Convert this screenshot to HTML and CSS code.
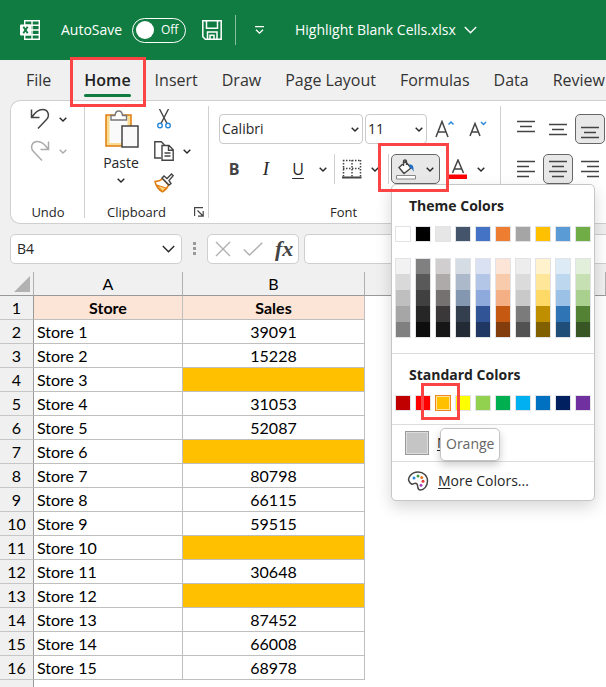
FILE: index.html
```html
<!DOCTYPE html>
<html lang="en">
<head>
<meta charset="utf-8">
<title>Highlight Blank Cells.xlsx</title>
<link rel="stylesheet" href="styles.css">
</head>
<body>
<svg class="defs" aria-hidden="true">
  <symbol id="chev" viewBox="0 0 8 5"><path d="M.7.7 4 4 7.3.7" fill="none" stroke="currentColor" stroke-width="1.4"/></symbol>
  <symbol id="chev-lg" viewBox="0 0 13 8"><path d="M.8 1 6.5 6.7 12.2 1" fill="none" stroke="currentColor" stroke-width="1.4"/></symbol>
</svg>

<header class="titlebar">
  <svg class="logo" viewBox="0 0 20 20" width="20" height="20">
    <path d="M4.700 5V.7h14.600v18.600H4.700V15M4.700 5.300h14.600M10 10h9.300M4.700 14.700h14.600M12 .7v18.600" fill="none" stroke="#fff" stroke-width="1.400"/>
    <rect x="0" y="4.500" width="11" height="11" rx="1" fill="#fff"/>
    <path d="M3.300 6.800l4.400 6.400M7.700 6.800l-4.400 6.400" stroke="#107c41" stroke-width="1.900"/>
  </svg>
  <span class="autosave" id="autosave">AutoSave</span>
  <button class="switch" role="switch" aria-checked="false" aria-labelledby="autosave"><span class="knob"></span>Off</button>
  <button class="plain save" aria-label="Save">
    <svg viewBox="0 0 20 20" width="20" height="20" fill="none" stroke="#fff" stroke-width="1.500"><path d="M.8.8h18.400v18.400H3.300L.8 16.700zM4.500.8v7.400h11V.8M5.500 19v-7h9.500v7M8 19v-3.700h4V19"/></svg>
  </button>
  <span class="divider"></span>
  <button class="plain qat" aria-label="Customize Quick Access Toolbar">
    <svg viewBox="0 0 11 9" width="11" height="9" fill="none" stroke="#fff" stroke-width="1.300"><path d="M1 .7h9M2 3.700l3.500 3.500L9 3.700"/></svg>
  </button>
  <button class="plain doc">Highlight Blank Cells.xlsx <svg width="13" height="8"><use href="#chev-lg"/></svg></button>
</header>

<nav class="tabs">
  <a href="#file" class="file">File</a>
  <a href="#home" class="active">Home<span class="callout callout-tab"></span></a>
  <a href="#insert">Insert</a>
  <a href="#draw">Draw</a>
  <a href="#layout">Page Layout</a>
  <a href="#formulas">Formulas</a>
  <a href="#data">Data</a>
  <a href="#review">Review</a>
</nav>

<section class="ribbon">
  <div class="group undo">
    <div class="pair">
      <button class="plain" aria-label="Undo"><svg width="20" height="22" viewBox="0 0 20 22" fill="none" stroke="#444" stroke-width="1.500"><path d="M1.500 1.500v8h8M2 9C5 4.500 8.500 1.500 12.500 1.500c6 0 7.500 6.500 4 10L8 20.500"/></svg></button>
      <button class="plain" aria-label="Undo list"><svg width="8" height="5"><use href="#chev"/></svg></button>
    </div>
    <div class="pair off">
      <button class="plain" aria-label="Redo"><svg width="20" height="22" viewBox="0 0 20 22" fill="none" stroke="#aaa" stroke-width="1.500"><path d="M18.500 1.500v8h-8M18 9C15 4.500 11.500 1.500 7.500 1.500c-6 0-7.500 6.500-4 10l8.500 9"/></svg></button>
      <button class="plain" aria-label="Redo list"><svg width="8" height="5"><use href="#chev"/></svg></button>
    </div>
    <div class="group-label">Undo</div>
  </div>

  <div class="group clipboard">
    <div class="clip-body">
      <button class="plain paste">
        <svg width="35" height="38" viewBox="0 0 35 38"><path d="M2 5h25v31H2z" fill="#f9dc8f" stroke="#e07c10" stroke-width="1.500"/><path d="M5.500 7h18v26h-18z" fill="#fafafa"/><path d="M7 10V5.500h4C11.500-.5 18-.5 18.500 5.500h4V10z" fill="#fff" stroke="#777" stroke-width="1.400"/><path d="M18 16h16v21H18z" fill="#fafafa" stroke="#444" stroke-width="1.500"/></svg>
        <span>Paste</span>
        <svg width="8" height="5"><use href="#chev"/></svg>
      </button>
      <div class="clip-tools">
        <button class="plain" aria-label="Cut"><svg width="20" height="20" viewBox="0 0 20 20" fill="none" stroke-width="1.400"><path d="M5.500 0 13 14.500M14.500 0 7 14.500" stroke="#444"/><circle cx="6" cy="16.500" r="2.300" stroke="#2b88d8"/><circle cx="14" cy="16.500" r="2.300" stroke="#2b88d8"/></svg></button>
        <div class="copy">
          <button class="plain" aria-label="Copy"><svg width="20" height="20" viewBox="0 0 20 20" fill="#fff" stroke="#444" stroke-width="1.400"><path d="M7 17H.8V.8h6.500l3.200 3.200"/><path d="M8 4.500h7l4.200 4.200v10.500H8zM14.500 4.500v4.700H19M10.500 12h6M10.500 15h6"/></svg></button>
          <button class="plain" aria-label="Copy options"><svg width="8" height="5"><use href="#chev"/></svg></button>
        </div>
        <button class="plain" aria-label="Format Painter"><svg width="20" height="20" viewBox="0 0 20 20"><path d="M1 8.500c3 0 5-.5 7.500-3l6 6.500c-1 3-3 5-6 6.800C5 17 2 13 1 8.500z" fill="#fff" stroke="#e07c10" stroke-width="1.500"/><path d="M3 12l9 3-3.500 3.500z" fill="#fbd070" stroke="#e07c10"/><path d="M8 5l2-2 3 2.500L17.500 1l1.700 1.700L15 7.500l2 3-2 1.500z" fill="#fff" stroke="#444" stroke-width="1.400"/></svg></button>
      </div>
    </div>
    <div class="group-label">Clipboard
      <button class="plain launcher" aria-label="Clipboard settings"><svg width="10" height="10" viewBox="0 0 10 10" fill="none" stroke="#444" stroke-width="1.200"><path d="M.6 9V.6H9M3.500 3.500l5 5M9.200 4v5.200H4"/></svg></button>
    </div>
  </div>

  <div class="group font">
    <div class="row">
      <div class="combo family"><select aria-label="Font"><option>Calibri</option></select><svg width="8" height="5"><use href="#chev"/></svg></div>
      <div class="combo size"><select aria-label="Font size"><option>11</option></select><svg width="8" height="5"><use href="#chev"/></svg></div>
      <button class="plain grow" aria-label="Increase font size"><svg width="20" height="18" viewBox="0 0 20 18" fill="none" stroke-width="1.500"><path d="M1 17 7 1.500 13 17M3 12h8" stroke="#444"/><path d="M13.500 4.500 16 2l2.500 2.500" stroke="#2b88d8"/></svg></button>
      <button class="plain shrink" aria-label="Decrease font size"><svg width="18" height="16" viewBox="0 0 18 16" fill="none" stroke-width="1.500"><path d="M1 15 6 2.500 11 15M2.700 11h6.600" stroke="#444"/><path d="M12 1l2.500 2.500L17 1" stroke="#2b88d8"/></svg></button>
    </div>
    <div class="row">
      <button class="plain cell bold">B</button>
      <button class="plain cell italic">I</button>
      <button class="plain cell under">U</button>
      <button class="plain narrow" aria-label="Underline options"><svg width="8" height="5"><use href="#chev"/></svg></button>
      <span class="rule"></span>
      <button class="plain borders" aria-label="Borders"><svg width="20" height="20" viewBox="0 0 20 20" fill="none" stroke="#444"><path d="M1 1.500h18M1 9.500h18M1.500 1v17M10 1v17M18.500 1v17" stroke-width="1.500" stroke-dasharray="1.500 1.500"/><path d="M0 18.500h19.500" stroke-width="2"/></svg></button>
      <button class="plain narrow" aria-label="Border options"><svg width="8" height="5"><use href="#chev"/></svg></button>
      <span class="rule rule-fill"></span>
      <div class="fill">
        <button class="fill-btn" aria-label="Fill color" aria-expanded="true">
          <svg width="20" height="21" viewBox="0 0 20 21"><path d="M9.500 2.500 15 9 8 14.500 3 8.500 9.500 2.500M7.500 7V3q0-2 1.500-2t1.500 2v3" fill="#fff" stroke="#444" stroke-width="1.400"/><path d="M13 5.500c4-.5 5 2 4.500 7.500-1-3-2-4-3.500-4z" fill="#1b6ec2"/><path d="M.5 16.500h19v3.500H.5z" fill="#fff" stroke="#888"/></svg>
          <svg width="8" height="5"><use href="#chev"/></svg>
        </button>
        <div class="menu">
          <h2>Theme Colors</h2>
          <div class="swatches" id="theme"></div>
          <div class="shades" id="shades"></div>
          <hr>
          <h2>Standard Colors</h2>
          <div class="swatches" id="standard"></div>
          <hr>
          <button class="plain item nofill"><span class="nofill-box"></span><span><u>N</u>o Fill</span></button>
          <hr>
          <button class="plain item more"><svg width="22" height="20" viewBox="0 0 22 20"><path d="M2 10C.5 7.500 4 1 11 1c5.500 0 9.500 3.500 9.500 9 0 5-3.500 9-7 9-4 0-2-4-3.500-6-2-2.500-3.500 1-5.500 0C3 12.500 2.500 11 2 10z" fill="#fff" stroke="#444" stroke-width="1.500"/><circle cx="7" cy="7" r="1.500" fill="#2b88d8"/><circle cx="11" cy="5" r="1.500" fill="#3b9b44"/><circle cx="14.700" cy="6.500" r="1.500" fill="#e87722"/><circle cx="16" cy="10.300" r="1.500" fill="#e23b3b"/><circle cx="14" cy="14.300" r="1.500" fill="#a349c4"/></svg><span><u>M</u>ore Colors...</span></button>
        </div>
        <span class="callout callout-fill"></span>
      </div>
      <button class="plain font-color" aria-label="Font color"><svg width="18" height="20" viewBox="0 0 18 20"><path d="M3.500 14 9 1l5.500 13M5.500 10h7" fill="none" stroke="#444" stroke-width="1.500"/><path d="M0 15.500h18V20H0z" fill="#f00"/></svg></button>
      <button class="plain narrow" aria-label="Font color options"><svg width="8" height="5"><use href="#chev"/></svg></button>
    </div>
    <div class="group-label">Font</div>
  </div>

  <div class="group align">
    <div class="row">
      <button class="plain cell" aria-label="Top align"><svg width="18" height="20" viewBox="0 0 18 20"><path d="M0 2.500h18M3 7.500h12M0 12.500h18"/></svg></button>
      <button class="plain cell" aria-label="Middle align"><svg width="18" height="20" viewBox="0 0 18 20"><path d="M0 5.500h18M3 10.500h12M0 15.500h18"/></svg></button>
      <button class="plain cell on" aria-label="Bottom align"><svg width="18" height="20" viewBox="0 0 18 20"><path d="M0 8.500h18M3 13.500h12M0 18.500h18"/></svg></button>
    </div>
    <div class="row">
      <button class="plain cell" aria-label="Align left"><svg width="18" height="20" viewBox="0 0 18 20"><path d="M0 2.500h18M0 7.500h12M0 12.500h18M0 17.500h12"/></svg></button>
      <button class="plain cell on" aria-label="Center"><svg width="18" height="20" viewBox="0 0 18 20"><path d="M0 2.500h18M3 7.500h12M0 12.500h18M3 17.500h12"/></svg></button>
      <button class="plain cell" aria-label="Align right"><svg width="18" height="20" viewBox="0 0 18 20"><path d="M0 2.500h18M6 7.500h12M0 12.500h18M6 17.500h12"/></svg></button>
    </div>
  </div>
</section>

<section class="formula">
  <div class="namebox"><input type="text" value="B4" aria-label="Name box"><button class="plain" aria-label="Names"><svg width="13" height="8"><use href="#chev-lg"/></svg></button></div>
  <svg class="grip" width="3" height="14" viewBox="0 0 3 14"><path d="M0 0h3v3H0zM0 5h3v3H0zM0 10h3v3H0z" fill="#999"/></svg>
  <div class="fx">
    <button class="plain" aria-label="Cancel"><svg width="16" height="16" viewBox="0 0 16 16"><path d="M1 1l14 14M15 1 1 15" stroke="#b0b0b0" stroke-width="1.400"/></svg></button>
    <button class="plain" aria-label="Enter"><svg width="20" height="14" viewBox="0 0 20 14"><path d="M.8 7.500 6.500 13 19.300.8" fill="none" stroke="#b0b0b0" stroke-width="1.400"/></svg></button>
    <button class="plain fx-btn" aria-label="Insert function">fx</button>
  </div>
  <input class="formula-input" type="text" aria-label="Formula">
</section>

<table class="sheet">
  <colgroup><col class="c-num"><col class="c-a"><col class="c-b"><col></colgroup>
  <thead><tr><th><svg class="corner" width="16" height="16" viewBox="0 0 16 16"><path d="M16 0v16H0z" fill="#b2b2b2"/></svg></th><th>A</th><th>B</th><th></th></tr></thead>
  <tbody id="rows"></tbody>
</table>
<script src="app.js"></script>
</body>
</html>
```

FILE: styles.css
```css
* { box-sizing: border-box; }
body {
  margin: 0;
  height: 100vh;
  overflow: hidden;
  background: #f0f0f0;
  color: #262626;
  font: 14px/20px "Open Sans", "Noto Sans", sans-serif;
}
.defs { position: absolute; width: 0; height: 0; }
svg { display: block; flex: none; }
button, input, select { font: inherit; color: inherit; }
.plain {
  display: flex;
  align-items: center;
  justify-content: center;
  flex: none;
  padding: 0;
  border: 0;
  background: none;
}

/* Title bar */
.titlebar {
  display: flex;
  align-items: center;
  height: 60px;
  padding-left: 20px;
  background: #107c41;
  color: #fff;
  white-space: nowrap;
}
.autosave { width: 71px; margin-left: 21px; }
.switch {
  display: flex;
  align-items: center;
  gap: 7px;
  width: 54px;
  height: 25px;
  padding: 0 3px;
  border: 1px solid #fff;
  border-radius: 13px;
  background: none;
  font-size: 12px;
}
.knob { width: 18px; height: 18px; border-radius: 50%; background: #fff; }
.save { margin-left: 16px; }
.divider { width: 1px; height: 30px; margin: 0 18px 0 13px; background: #88bea0; }
.doc { gap: 8px; margin-left: 30px; }

/* Tabs */
.tabs { display: flex; gap: 24px; height: 40px; padding-left: 26px; font-size: 16px; white-space: nowrap; }
.tabs a { position: relative; height: 40px; line-height: 40px; color: #333; text-decoration: none; }
.tabs .file { margin-right: 9px; }
.tabs .active { font-weight: 600; color: #222; }
.tabs .active::after {
  content: "";
  position: absolute;
  left: 0;
  right: 0;
  bottom: 3px;
  height: 3px;
  border-radius: 2px;
  background: #107c41;
}
.callout { position: absolute; z-index: 5; border: 3px solid #fb4444; pointer-events: none; }
.callout-tab { inset: -3px -15px -7px -14px; }
.callout-fill { inset: -11px -9px -8px -13px; }
.callout-swatch { inset: -13px -10px -10px -15px; }

/* Ribbon */
.ribbon {
  display: flex;
  height: 124px;
  margin-left: 10px;
  padding: 5px 0;
  border: 1px solid #cfcfcf;
  border-right: 0;
  border-radius: 10px 0 0 10px;
  background: #fff;
}
.group { position: relative; display: flex; flex: none; flex-direction: column; border-right: 1px solid #d0d0d0; }
.group-label { display: flex; justify-content: center; height: 12px; margin-top: auto; font-size: 13px; line-height: 12px; }
.undo { width: 74px; padding-left: 1px; }
.pair { display: flex; align-items: center; gap: 9px; height: 32px; padding: 0 0 6px 18px; }
.off { color: #aaa; }
.clipboard { width: 124px; }
.clip-body { display: flex; gap: 15px; padding-left: 18px; }
.paste { flex-direction: column; justify-content: flex-start; gap: 5px; width: 36px; padding-top: 4px; }
.clip-tools { display: flex; flex-direction: column; align-items: flex-start; gap: 12px; padding-top: 3px; }
.copy { display: flex; gap: 9px; }
.clipboard .group-label { gap: 28px; padding-left: 18px; }
.font { width: 292px; padding: 8px 0 0 10px; gap: 10px; }
.font .group-label { padding-right: 32px; }
.row { display: flex; align-items: center; height: 30px; }
.combo { position: relative; height: 30px; margin-right: 2px; }
.combo select {
  appearance: none;
  width: 100%;
  height: 100%;
  padding: 0 0 0 2px;
  border: 1px solid #cacaca;
  border-radius: 4px;
  background: #fff;
}
.combo svg { position: absolute; right: 4px; top: 13px; pointer-events: none; }
.family { width: 144px; }
.size { width: 62px; }
.grow { margin: 0 14px 0 6px; }
.cell { width: 30px; height: 30px; margin-right: 2px; border-radius: 5px; }
.bold { font-weight: 700; font-size: 16px; color: #444; }
.italic { font: italic 19px "Liberation Serif", serif; }
.under { font-size: 16px; text-decoration: underline; text-underline-offset: 3px; }
.narrow { width: 15px; height: 30px; }
.rule { width: 1px; height: 30px; margin: 0 7px 0 4px; background: #d0d0d0; }
.rule-fill { margin: 0 2px 0 6px; }
.font .borders { margin-right: 5px; }
.fill { position: relative; }
.fill-btn {
  display: flex;
  align-items: center;
  gap: 10px;
  width: 49px;
  height: 30px;
  padding: 0 5px 0 4px;
  border: 1px solid #666;
  border-radius: 5px;
  background: #e8e8e8;
}
.font-color { margin: 0 6px 0 9px; }
.align { gap: 10px; padding: 8px 0 0 10px; border: 0; }
.align svg { fill: none; stroke: #444; stroke-width: 1.5; }
.on { border: 1px solid #666; background: #e8e8e8; }

/* Fill colour menu */
.menu {
  position: absolute;
  z-index: 3;
  top: 30px;
  left: 0;
  width: 204px;
  border: 1px solid #c6c6c6;
  border-radius: 5px;
  background: #fff;
  box-shadow: 0 6px 16px rgba(0, 0, 0, .16);
}
.menu h2 { margin: 0; padding: 11px 0 10px 17px; font-size: 14px; line-height: 20px; font-weight: 700; color: #222; }
.menu hr { margin: 0; border: 0; border-top: 1px solid #ddd; }
.swatches, .shades { display: flex; gap: 4px; padding-left: 3px; }
.swatch { position: relative; width: 16px; height: 16px; padding: 0; border: 1px solid #e1e3e6; }
.shades { padding-top: 16px; padding-bottom: 15px; }
.shade-col { display: flex; flex-direction: column; width: 16px; border: 1px solid #e1e3e6; }
.shade { height: 16px; padding: 0; border: 0; }
.shade:first-child, .shade:last-child { height: 15px; }
#standard { padding-bottom: 13px; }
.swatch.picked { border-color: #ee8822; box-shadow: inset 0 0 0 1px #ffe39a; }
.tooltip {
  position: absolute;
  z-index: 6;
  top: 32px;
  left: 4px;
  padding: 5px 5px 6px;
  border: 1px solid #c4c4c4;
  border-radius: 5px;
  background: #fff;
  color: #666;
  line-height: 20px;
  box-shadow: 0 4px 8px rgba(0, 0, 0, .2);
}
.item { justify-content: flex-start; width: 100%; height: 36px; gap: 8px; padding-left: 13px; }
.more { height: 38px; gap: 9px; padding-left: 15px; }
.item u { text-underline-offset: 2px; }
.nofill-box { width: 24px; height: 24px; border: 1px solid #999; background: #c5c5c5; box-shadow: inset 0 0 0 1px #ddd; }

/* Formula bar */
.formula { display: flex; align-items: center; height: 30px; margin: 10px 0 8px 10px; }
.namebox, .fx, .formula-input { height: 30px; border: 1px solid #cfcfcf; border-radius: 5px; background: #fff; }
.namebox { display: flex; flex: none; width: 172px; padding-right: 6px; }
.namebox input { flex: 1; min-width: 0; padding: 0 6px; border: 0; background: none; }
.grip { margin: 0 11px; }
.fx { display: flex; align-items: center; flex: none; gap: 12px; width: 92px; margin-right: 5px; padding-left: 7px; }
.fx-btn { font: italic bold 22px "Liberation Serif", serif; color: #444; }
.formula-input { flex: 1; min-width: 0; border-right: 0; border-radius: 5px 0 0 5px; }

/* Sheet */
.sheet {
  width: 100%;
  table-layout: fixed;
  border-collapse: separate;
  border-spacing: 0;
  background: #fff;
  color: #000;
  font: 16px/23px Lato, "Noto Sans", sans-serif;
}
.c-num { width: 34px; }
.c-a { width: 149px; }
.c-b { width: 182px; }
.sheet th, .sheet td { height: 24px; padding: 0; }
.sheet thead th {
  border-right: 1px solid #b0b0b0;
  border-bottom: 1px solid #999;
  background: #f0f0f0;
  font-weight: 400;
}
.corner { margin-left: 14px; }
.sheet tbody th { border-right: 1px solid #999; border-bottom: 1px solid #c6c6c6; background: #f0f0f0; font-weight: 400; }
.sheet td { border-right: 1px solid #bfbfbf; border-bottom: 1px solid #bfbfbf; text-align: center; }
.sheet td.name { padding-left: 3px; text-align: left; }
.sheet td.head { background: #fce4d6; font-weight: 700; }
.sheet td.blank { background: #ffc000; }
.sheet td.empty { border: 0; }
```

FILE: app.js
```js
const theme = ['#ffffff', '#000000', '#e7e6e6', '#44546a', '#4472c4', '#ed7d31', '#a5a5a5', '#ffc000', '#5b9bd5', '#70ad47'];
const shades = [
  ['#f2f2f2', '#d9d9d9', '#bfbfbf', '#a6a6a6', '#808080'],
  ['#808080', '#595959', '#404040', '#262626', '#0d0d0d'],
  ['#d0cece', '#aeaaaa', '#757171', '#3a3838', '#161616'],
  ['#d6dce4', '#acb9ca', '#8497b0', '#333f4f', '#222b35'],
  ['#d9e1f2', '#b4c6e7', '#8ea9db', '#305496', '#203764'],
  ['#fce4d6', '#f8cbad', '#f4b084', '#c65911', '#833c0c'],
  ['#ededed', '#dbdbdb', '#c9c9c9', '#7b7b7b', '#525252'],
  ['#fff2cc', '#ffe699', '#ffd966', '#bf8f00', '#806000'],
  ['#ddebf7', '#bdd7ee', '#9bc2e6', '#2f75b5', '#1f4e78'],
  ['#e2efda', '#c6e0b4', '#a9d08e', '#548235', '#375623']
];
const standard = ['#c00000', '#ff0000', '#ffc000', '#ffff00', '#92d050', '#00b050', '#00b0f0', '#0070c0', '#002060', '#7030a0'];
const sales = [39091, 15228, '', 31053, 52087, '', 80798, 66115, 59515, '', 30648, '', 87452, 66008, 68978];

const chip = (cls, color) => `<button class="${cls}" style="background-color:${color}" aria-label="${color}"></button>`;
document.getElementById('theme').innerHTML = theme.map(c => chip('swatch', c)).join('');
document.getElementById('shades').innerHTML = shades
  .map(col => `<div class="shade-col">${col.map(c => chip('shade', c)).join('')}</div>`).join('');
document.getElementById('standard').innerHTML = standard.map(c => chip('swatch', c)).join('');

const picked = document.querySelectorAll('#standard .swatch')[2];
picked.classList.add('picked');
picked.innerHTML = '<span class="callout callout-swatch"></span><span class="tooltip" role="tooltip">Orange</span>';

let html = '<tr><th>1</th><td class="head">Store</td><td class="head">Sales</td><td class="empty"></td></tr>';
sales.forEach((v, i) => {
  html += `<tr><th>${i + 2}</th><td class="name">Store ${i + 1}</td><td${v === '' ? ' class="blank"' : ''}>${v}</td><td class="empty"></td></tr>`;
});
html += '<tr><th>17</th><td class="empty"></td><td class="empty"></td><td class="empty"></td></tr>';
document.getElementById('rows').innerHTML = html;
```
